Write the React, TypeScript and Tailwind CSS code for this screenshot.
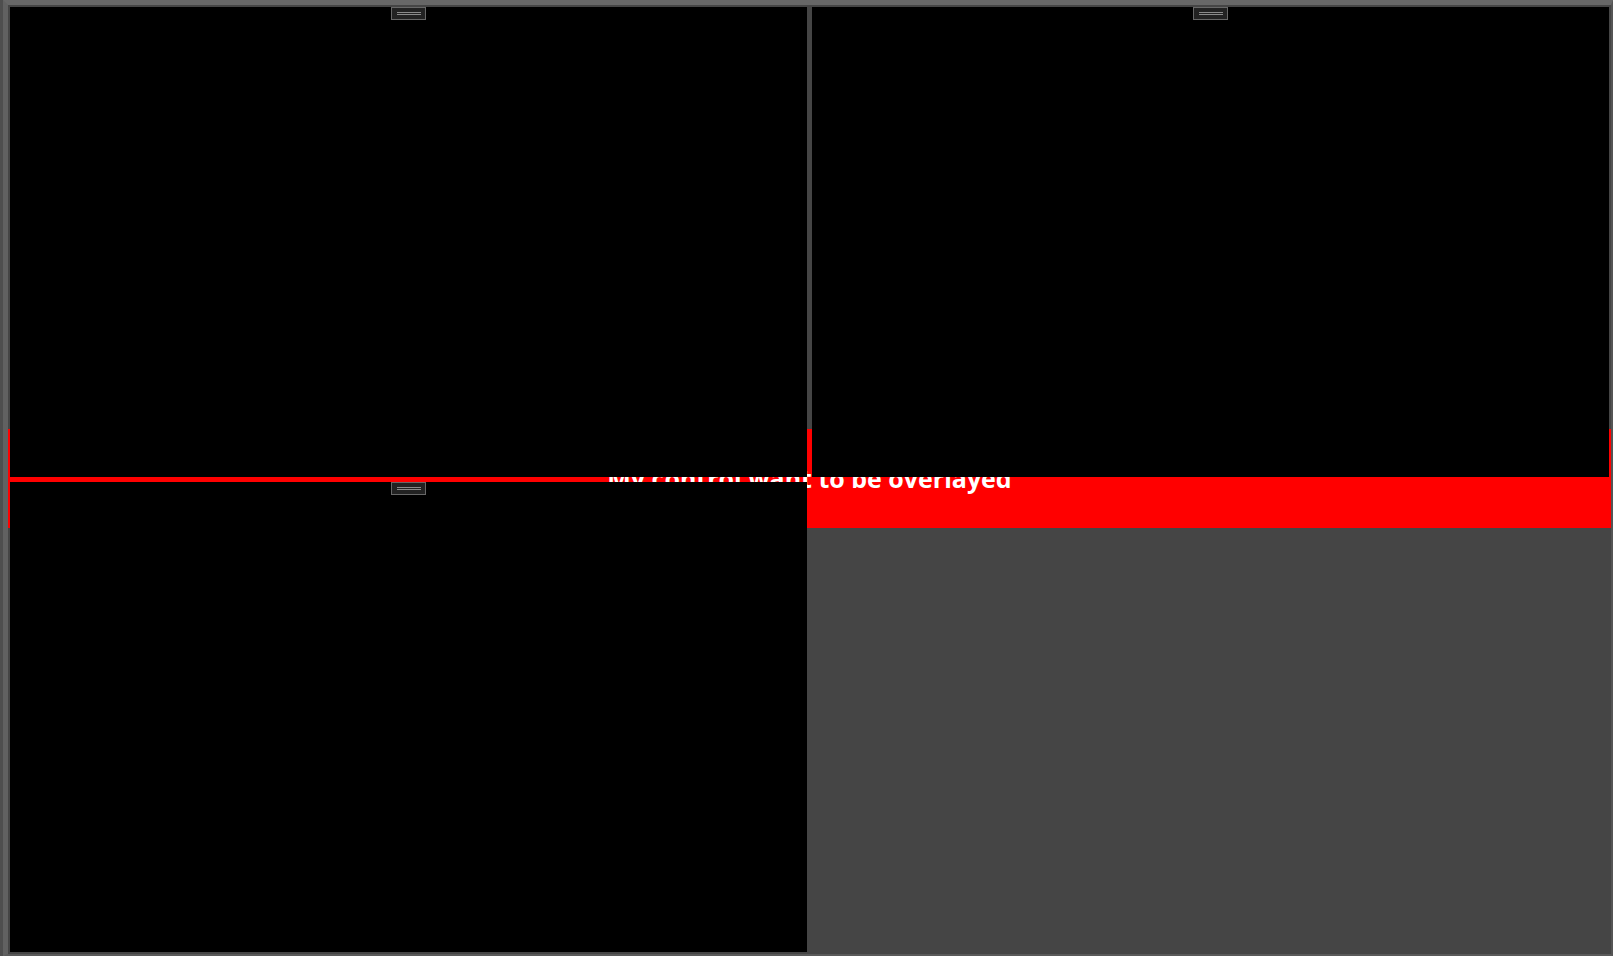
function Grip() {
  return (
    <div className="mx-auto flex h-[13px] w-[35px] flex-col items-center justify-center gap-[1px] border border-[#676767] bg-[#222222]">
      <div className="h-px w-[24px] bg-[#8a8a8a]" />
      <div className="h-px w-[24px] bg-[#8a8a8a]" />
    </div>
  );
}

function Pane() {
  return (
    <div className="bg-black">
      <Grip />
    </div>
  );
}

export default function App() {
  return (
    <div className="h-[956px] w-[1613px] border-l-[3px] border-[#4e4e4e] bg-[#454545]">
      <div className="h-full border-t-[5px] border-b-2 border-l-[5px] border-r-2 border-t-[#676767] border-b-[#5a5a5a] border-l-[#616161] border-r-[#555555]">
        <div className="relative h-full p-[2px]">
          {/* red control sitting behind the panes */}
          <div className="absolute inset-x-0 top-[424px] z-0 flex h-[99px] items-center justify-center bg-[#ff0000]">
            <span className="font-['Open_Sans','Noto_Sans',sans-serif] text-[25px] font-bold text-white">
              My control want to be overlayed
            </span>
          </div>
          <div className="relative z-10 grid h-full grid-cols-[797px_797px] grid-rows-[470px_470px] gap-[5px]">
            <Pane />
            <Pane />
            <Pane />
            <div />
          </div>
        </div>
      </div>
    </div>
  );
}
